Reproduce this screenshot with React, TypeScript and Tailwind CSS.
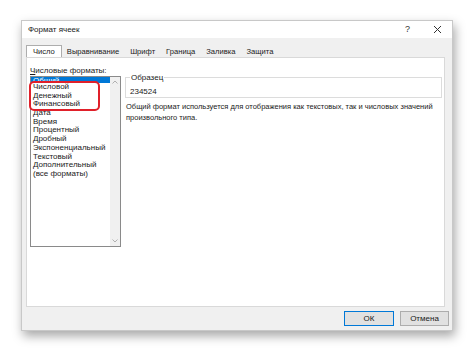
import React from 'react';

const formats = [
  'Числовой',
  'Денежный',
  'Финансовый',
  'Дата',
  'Время',
  'Процентный',
  'Дробный',
  'Экспоненциальный',
  'Текстовый',
  'Дополнительный',
  '(все форматы)',
];

const tabs = ['Выравнивание', 'Шрифт', 'Граница', 'Заливка', 'Защита'];

export default function App() {
  return (
    <div className="w-[474px] h-[352px] bg-white pt-[20px] pl-[21px] font-['Liberation_Sans',Arial,sans-serif] text-[8px] leading-[9px] text-[#1a1a1a] overflow-hidden">
      <div className="w-[432px] h-[311px] bg-[#f0f0f0] border border-[#c8c8c8] shadow-[2px_5px_10px_rgba(0,0,0,0.35)] flex flex-col">
        {/* title bar */}
        <div className="h-[17px] bg-white flex items-center pl-[6px] pr-[10px]">
          <span>Формат ячеек</span>
          <span className="ml-auto text-[9px] text-[#333]">?</span>
          <svg className="ml-[23px]" width="9" height="9" viewBox="0 0 9 9">
            <path d="M1 1L8 8M8 1L1 8" stroke="#333" strokeWidth="1" />
          </svg>
        </div>

        {/* tabs */}
        <div className="h-[19px] flex items-end pl-[4px] text-[7.6px]">
          <div className="h-[12px] px-[6px] bg-white border border-[#adadad] border-b-0 flex items-center">Число</div>
          <div className="flex items-end gap-[1px]">
            {tabs.map(t => (
              <div key={t} className="h-[11px] px-[5px] flex items-center">
                {t}
              </div>
            ))}
          </div>
        </div>

        {/* panel */}
        <div className="ml-[4px] mr-[7px] h-[250px] bg-white border border-[#d9d9d9] flex gap-[4px] pl-[3px] pr-[2px] pt-[7px]">
          <div className="flex flex-col w-[91px]">
            <div className="h-[10px] flex items-center"><span className="underline">Ч</span>исловые форматы:</div>
            <div className="mt-[1px] h-[171px] border border-[#8a8a8a] flex">
              <div className="flex-1 flex flex-col overflow-hidden">
                <div className="h-[6px] bg-[#0078d7] text-white flex items-end overflow-hidden pl-[2px]">
                  <span className="leading-[8px] translate-y-[2px]">Общий</span>
                </div>
                {formats.map(f => (
                  <div key={f} className="h-[8.7px] leading-[8.7px] pl-[2px] whitespace-nowrap">{f}</div>
                ))}
              </div>
              <div className="w-[10px] bg-[#f0f0f0] flex flex-col items-center justify-between py-[3px]">
                <svg width="6" height="4" viewBox="0 0 6 4"><path d="M0.5 3.5L3 1L5.5 3.5" fill="none" stroke="#a0a0a0" strokeWidth="0.8" /></svg>
                <svg width="6" height="4" viewBox="0 0 6 4"><path d="M0.5 0.5L3 3L5.5 0.5" fill="none" stroke="#a0a0a0" strokeWidth="0.8" /></svg>
              </div>
            </div>
          </div>

          <div className="flex-1 flex flex-col pt-[8px]">
            <fieldset className="h-[25px] border border-[#dcdcdc] px-[4px] mx-0">
              <legend className="px-[1px]">Образец</legend>
              <div className="pt-[5px]">234524</div>
            </fieldset>
            <p className="mt-[3px] pl-[1px] leading-[11px] text-[7.5px]">
              Общий формат используется для отображения как текстовых, так и числовых значений произвольного типа.
            </p>
          </div>
        </div>

        {/* footer */}
        <div className="flex-1 flex items-center justify-end gap-[6px] pr-[3px]">
          <button className="w-[50px] h-[15px] bg-[#e1e1e1] border border-[#0078d7] flex items-center justify-center">ОК</button>
          <button className="w-[49px] h-[15px] bg-[#e1e1e1] border border-[#adadad] flex items-center justify-center">Отмена</button>
        </div>
      </div>

      {/* red highlight over list items */}
      <div className="absolute left-[29px] top-[81px] w-[71px] h-[30px] border-2 border-[#e0202a] rounded-[5px]" />
    </div>
  );
}
